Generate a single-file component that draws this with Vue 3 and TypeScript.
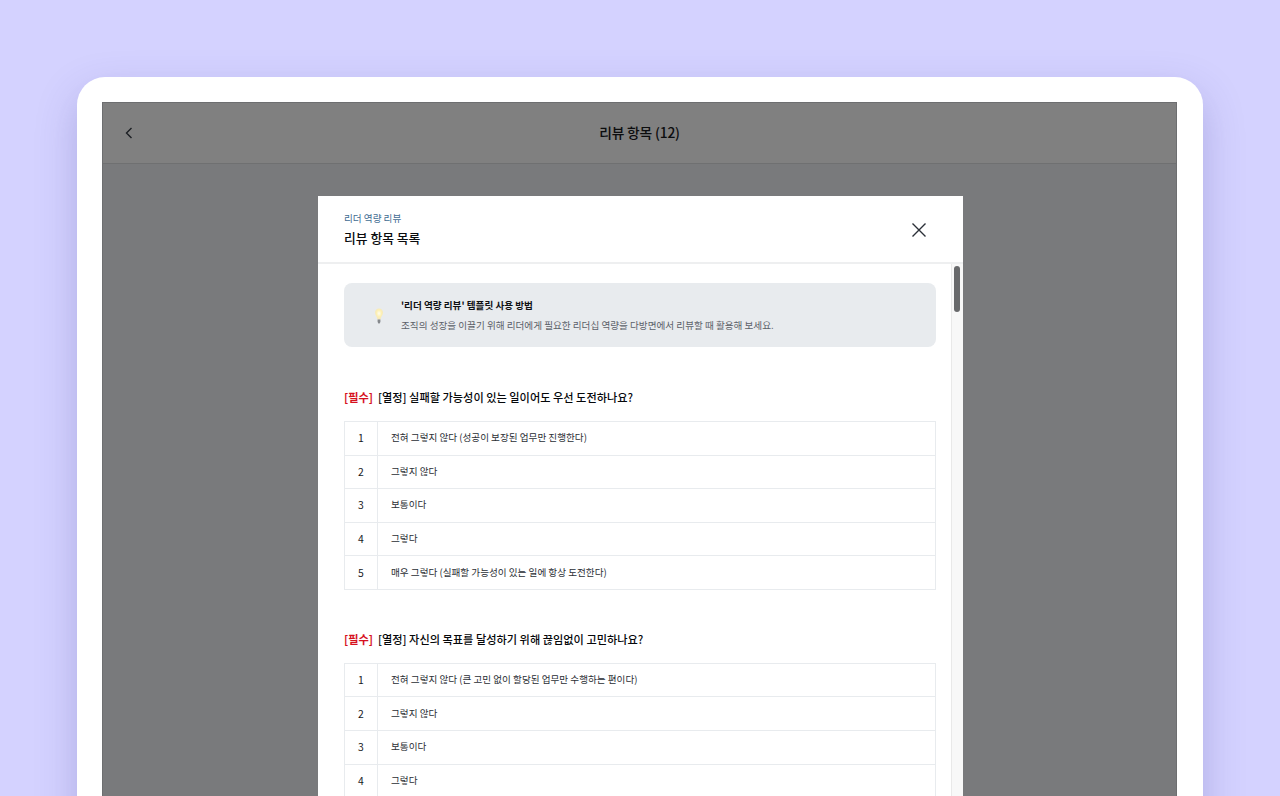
<script setup lang="ts">
interface Question { title: string; options: string[] }
const questions: Question[] = [
  {
    title: '[열정] 실패할 가능성이 있는 일이어도 우선 도전하나요?',
    options: ['전혀 그렇지 않다 (성공이 보장된 업무만 진행한다)', '그렇지 않다', '보통이다', '그렇다', '매우 그렇다 (실패할 가능성이 있는 일에 항상 도전한다)'],
  },
  {
    title: '[열정] 자신의 목표를 달성하기 위해 끊임없이 고민하나요?',
    options: ['전혀 그렇지 않다 (큰 고민 없이 할당된 업무만 수행하는 편이다)', '그렇지 않다', '보통이다', '그렇다', '매우 그렇다'],
  },
]
</script>

<template>
  <div class="page">
    <div class="device">
      <div class="screen">
        <header class="topbar">
          <svg class="back" width="16" height="16" viewBox="0 0 16 16" fill="none">
            <path d="M10.5 3 L5.5 8 L10.5 13" stroke="#1c1f24" stroke-width="1.4" />
          </svg>
          <h1 class="topbar-title">리뷰 항목 (12)</h1>
        </header>
        <div class="stage">
          <section class="modal">
            <div class="modal-head">
              <div>
                <p class="eyebrow">리더 역량 리뷰</p>
                <h2 class="modal-title">리뷰 항목 목록</h2>
              </div>
              <svg class="close" width="16" height="16" viewBox="0 0 16 16" fill="none">
                <path d="M1.5 1.5 L14.5 14.5 M14.5 1.5 L1.5 14.5" stroke="#2b3038" stroke-width="1.4" />
              </svg>
            </div>
            <div class="modal-body">
              <div class="content">
                <div class="notice">
                  <svg class="bulb" width="12" height="18" viewBox="0 0 12 18">
                    <defs>
                      <radialGradient id="bulb-glow" cx="50%" cy="45%" r="55%">
                        <stop offset="0%" stop-color="#fffdf0" />
                        <stop offset="55%" stop-color="#fdf0b4" />
                        <stop offset="100%" stop-color="#f3e7bd" />
                      </radialGradient>
                    </defs>
                    <path d="M6 1.500 C3.500 1.500 2 3.400 2 5.600 C2 8 3.900 9.300 4.400 12.400 L7.600 12.400 C8.100 9.300 10 8 10 5.600 C10 3.400 8.500 1.500 6 1.500 Z" fill="url(#bulb-glow)" />
                    <path d="M4.600 12.500 H7.400 V15 L6.600 16.500 H5.400 L4.600 15 Z" fill="#85888c" />
                  </svg>
                  <div>
                    <p class="notice-title">'리더 역량 리뷰' 템플릿 사용 방법</p>
                    <p class="notice-text">조직의 성장을 이끌기 위해 리더에게 필요한 리더십 역량을 다방면에서 리뷰할 때 활용해 보세요.</p>
                  </div>
                </div>
                <div v-for="q in questions" :key="q.title" class="question">
                  <h3 class="q-title"><span class="req">[필수]</span>{{ q.title }}</h3>
                  <div class="options">
                    <div v-for="(o, i) in q.options" :key="o" class="option">
                      <div class="num">{{ i + 1 }}</div>
                      <div class="label">{{ o }}</div>
                    </div>
                  </div>
                </div>
              </div>
              <div class="track"><div class="thumb"></div></div>
            </div>
          </section>
        </div>
      </div>
    </div>
  </div>
</template>

<style>
html, body { margin: 0; overflow: hidden; }
</style>

<style scoped>
* { box-sizing: border-box; }
p, h1, h2, h3 { margin: 0; }
.page {
  height: 796px;
  overflow: hidden;
  background: #d4d2ff;
  padding: 77px 77px 0;
  font-family: "Noto Sans CJK KR", "Noto Sans", sans-serif;
}
.device {
  height: 800px;
  background: #fff;
  border-radius: 28px 28px 0 0;
  padding: 25px 26px 0 25px;
  box-shadow: 0 16px 40px rgba(70, 66, 150, 0.26);
}
.screen {
  height: 100%;
  display: flex;
  flex-direction: column;
  border: 1px solid #6d6e70;
  border-bottom: 0;
  background: #797a7c;
}
.topbar {
  height: 61px;
  flex: none;
  background: #808080;
  border-bottom: 1px solid #6f7071;
  display: flex;
  align-items: center;
  justify-content: center;
  position: relative;
  padding-bottom: 2px;
}
.back { position: absolute; left: 18px; top: 22px; }
.topbar-title { font-size: 13.8px; font-weight: 500; color: #0c0d0e; letter-spacing: -0.2px; }
.stage { flex: 1; display: flex; justify-content: center; padding: 32px 213px 0 215px; }
.modal { width: 645px; height: 640px; background: #fff; }
.modal-head {
  height: 68px;
  display: flex;
  justify-content: space-between;
  padding: 15px 36px 0 26px;
  border-bottom: 2px solid #eeeff0;
}
.eyebrow { font-size: 9.6px; line-height: 14px; color: #3f6c92; }
.modal-title { font-size: 12.800px; line-height: 20px; font-weight: 500; color: #0a0c0f; margin-top: 3px; }
.close { margin-top: 11px; }
.modal-body { display: flex; }
.content { width: 633px; padding: 19px 15px 0 26px; }
.notice {
  height: 64px;
  background: #e8ebee;
  border-radius: 8px;
  display: flex;
  align-items: center;
  padding-left: 29px;
}
.bulb { margin: 2px 16px 0 0; flex: none; }
.notice-title { font-size: 9.6px; line-height: 16px; font-weight: 700; color: #0f1114; }
.notice-text { font-size: 9.6px; line-height: 16px; color: #5b6068; margin-top: 4px; }
.question { margin-top: 38px; }
.question + .question { margin-top: 36.400px; }
.q-title { font-size: 11.2px; line-height: 24px; font-weight: 500; color: #05070a; }
.req { color: #d6111e; margin-right: 5px; font-weight: 700; }
.options { margin-top: 12px; border: 1px solid #e8ebee; }
.option { display: flex; height: 33.600px; border-bottom: 1px solid #e8ebee; }
.option:last-child { border-bottom: 0; height: 33px; }
.num {
  width: 33px;
  flex: none;
  border-right: 1px solid #e8ebee;
  display: flex;
  align-items: center;
  justify-content: center;
  font-size: 10.4px;
  color: #17191c;
  padding-bottom: 1px;
}
.label {
  padding: 0 0 2px 13px;
  display: flex;
  align-items: center;
  font-size: 9.6px;
  color: #2a2e34;
}
.track {
  width: 12px;
  flex: none;
  height: 540px;
  background: #f8f8f8;
  border-left: 1px solid #e9e9e9;
  padding: 2px 0 0 2px;
}
.thumb { width: 6px; height: 46px; border-radius: 3px; background: #68696b; }
</style>
